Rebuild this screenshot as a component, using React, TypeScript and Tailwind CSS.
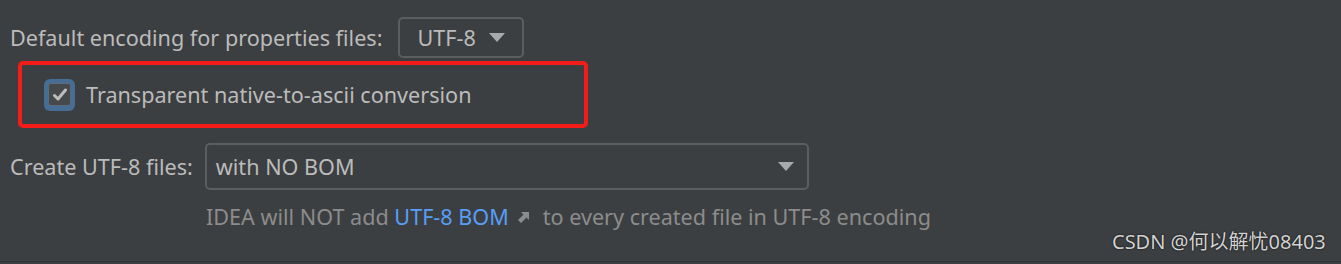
import React from "react";

const font = { fontFamily: '"Noto Sans", "Noto Sans CJK SC", sans-serif' };

const Caret = ({ className }: { className?: string }) => (
    <svg width="18" height="11" viewBox="0 0 18 11" className={className}>
        <path d="M1 1 L17 1 L9 10 Z" fill="#a7a9ab" />
    </svg>
);

export default function App() {
    return (
        <div
            className="relative w-[1341px] h-[264px] bg-[#3c3f41] text-[#bbbbbb] text-[21.6px] overflow-hidden"
            style={font}
        >
            <div className="flex flex-col pt-[17px]">
                {/* Properties encoding */}
                <div className="flex items-center h-[41px]">
                    <span className="ml-[10px] leading-none">Default encoding for properties files:</span>
                    <div className="ml-[16px] flex items-center h-[41px] w-[126px] border-2 border-[#5b5e61] rounded-[5px] pl-[17px]">
                        <span className="leading-none">UTF-8</span>
                        <Caret className="ml-[12px]" />
                    </div>
                </div>

                {/* Checkbox row, highlighted */}
                <div className="ml-[18px] mt-[3px] w-[570px] h-[67px] border-4 border-[#f41c18] rounded-[5px] flex items-center pl-[22px]">
                    <div className="w-[31px] h-[32px] rounded-[6px] bg-[#466d94] flex items-center justify-center">
                        <div className="w-[23px] h-[23px] rounded-[3px] bg-[#45494b] border border-[#5d6b7a] flex items-center justify-center">
                            <svg width="16" height="14" viewBox="0 0 16 14">
                                <path d="M2.5 7.5 L6 11 L13.5 2" stroke="#bdbdbd" strokeWidth="3" fill="none" strokeLinecap="round" strokeLinejoin="round" />
                            </svg>
                        </div>
                    </div>
                    <span className="ml-[11px] leading-none">Transparent native-to-ascii conversion</span>
                </div>

                {/* Create UTF-8 files */}
                <div className="flex items-center mt-[15px] h-[47px]">
                    <span className="ml-[10px] leading-none">Create UTF-8 files:</span>
                    <div className="ml-[12px] flex items-center justify-between h-[47px] w-[604px] border-2 border-[#5b5e61] rounded-[5px] pl-[9px] pr-[12px]">
                        <span className="leading-none">with NO BOM</span>
                        <Caret />
                    </div>
                </div>

                <div className="ml-[206px] mt-[16px] flex items-center text-[#8c8c8c] leading-none">
                    <span>IDEA will NOT add&nbsp;</span>
                    <span className="text-[#589df6]">UTF-8 BOM</span>
                    <svg width="12" height="12" viewBox="0 0 12 12" className="ml-[9px] mr-[13px]">
                        <path d="M3 1 L11 1 L11 9 L8.5 6.5 L3 12 L0 9 L5.5 3.5 Z" fill="#8c8c8c" />
                    </svg>
                    <span>to every created file in UTF-8 encoding</span>
                </div>
            </div>

            <div className="absolute left-[1112px] top-[232px] text-[20px] leading-none text-[#d2d2d2] [text-shadow:0_0_2px_#000]">
                CSDN @何以解忧08403
            </div>
            <div className="absolute left-0 bottom-[2px] w-full h-px bg-[#2f3133]" />
        </div>
    );
}
